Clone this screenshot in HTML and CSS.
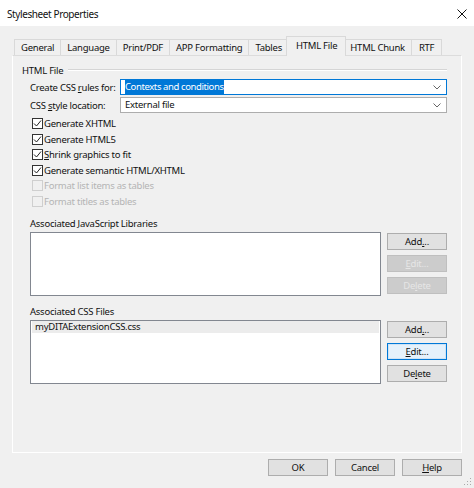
FILE: index.html
```html
<!DOCTYPE html>
<html>
<head>
<meta charset="utf-8">
<title>Stylesheet Properties</title>
<link rel="stylesheet" href="styles.css">
</head>
<body>
<div class="window">
  <div class="titlebar">
    <span class="title">Stylesheet Properties</span>
    <span class="close"><svg width="10" height="10" viewBox="0 0 10 10"><path d="M0.5 0.5 L9.5 9.5 M9.5 0.5 L0.5 9.5" stroke="#111" stroke-width="1" fill="none"/></svg></span>
  </div>

  <div class="tabs">
    <div class="tab">General</div>
    <div class="tab">Language</div>
    <div class="tab">Print/PDF</div>
    <div class="tab">APP Formatting</div>
    <div class="tab">Tables</div>
    <div class="tab active">HTML File</div>
    <div class="tab">HTML Chunk</div>
    <div class="tab">RTF</div>
  </div>

  <div class="panel">
    <div class="group-head"><span class="group-title">HTML File</span><span class="group-rule"></span></div>

    <div class="field-row">
      <span class="field-label">Create CSS <u>r</u>ules for:</span>
      <div class="combo focused">
        <span class="combo-value"><span class="selected-text">Contexts and conditions</span></span>
        <svg class="chev" width="8" height="5" viewBox="0 0 8 5"><path d="M0.5 0.5 L4 4 L7.5 0.5" stroke="#666" stroke-width="1" fill="none"/></svg>
      </div>
    </div>
    <div class="field-row">
      <span class="field-label">CSS <u>s</u>tyle location:</span>
      <div class="combo">
        <span class="combo-value">External file</span>
        <svg class="chev" width="8" height="5" viewBox="0 0 8 5"><path d="M0.5 0.5 L4 4 L7.5 0.5" stroke="#666" stroke-width="1" fill="none"/></svg>
      </div>
    </div>

    <div class="checks">
      <div class="check"><span class="box"><svg width="9" height="9" viewBox="0 0 9 9"><path d="M1 4.5 L3.5 7 L8 1.5" stroke="#222" stroke-width="1" fill="none"/></svg></span><span>Generate XHTML</span></div>
      <div class="check"><span class="box"><svg width="9" height="9" viewBox="0 0 9 9"><path d="M1 4.5 L3.5 7 L8 1.5" stroke="#222" stroke-width="1" fill="none"/></svg></span><span>Generate HTML5</span></div>
      <div class="check"><span class="box"><svg width="9" height="9" viewBox="0 0 9 9"><path d="M1 4.5 L3.5 7 L8 1.5" stroke="#222" stroke-width="1" fill="none"/></svg></span><span><u>S</u>hrink graphics to fit</span></div>
      <div class="check"><span class="box"><svg width="9" height="9" viewBox="0 0 9 9"><path d="M1 4.5 L3.5 7 L8 1.5" stroke="#222" stroke-width="1" fill="none"/></svg></span><span>Generate semantic HTML/XHTML</span></div>
      <div class="check disabled"><span class="box"></span><span>Format list items as tables</span></div>
      <div class="check disabled"><span class="box"></span><span>Format titles as tables</span></div>
    </div>

    <div class="section-label">Associated JavaScript Libraries</div>
    <div class="list-row">
      <div class="listbox"></div>
      <div class="btn-col">
        <button class="btn">Add<u>.</u>..</button>
        <button class="btn" disabled><u>E</u>dit...</button>
        <button class="btn" disabled>De<u>l</u>ete</button>
      </div>
    </div>

    <div class="section-label second">Associated CSS Files</div>
    <div class="list-row">
      <div class="listbox">
        <div class="list-item">myDITAExtensionCSS.css</div>
      </div>
      <div class="btn-col">
        <button class="btn">Add<u>.</u>..</button>
        <button class="btn focus"><u>E</u>dit...</button>
        <button class="btn">De<u>l</u>ete</button>
      </div>
    </div>
  </div>

  <div class="footer">
    <button class="btn wide">OK</button>
    <button class="btn wide">Cancel</button>
    <button class="btn wide"><u>H</u>elp</button>
  </div>

  <svg class="grip" width="8" height="8" viewBox="0 0 8 8">
    <rect x="6" y="0" width="1" height="1" fill="#aaa"/>
    <rect x="3" y="3" width="1" height="1" fill="#aaa"/>
    <rect x="6" y="3" width="1" height="1" fill="#aaa"/>
    <rect x="0" y="6" width="1" height="1" fill="#aaa"/>
    <rect x="3" y="6" width="1" height="1" fill="#aaa"/>
    <rect x="6" y="6" width="1" height="1" fill="#aaa"/>
  </svg>
</div>
</body>
</html>
```

FILE: styles.css
```css
* { box-sizing: border-box; }

html, body {
  margin: 0;
  padding: 0;
  background: #f0f0f0;
}

body {
  font-family: "Noto Sans", "Open Sans", sans-serif;
  font-size: 9.5px;
  letter-spacing: -0.25px;
  color: #111;
}

.window {
  position: relative;
  width: 474px;
  height: 488px;
  background: #f0f0f0;
  overflow: hidden;
}

/* title bar */
.titlebar {
  height: 26px;
  background: #fff;
  display: flex;
  align-items: center;
  padding-left: 7px;
}
.title {
  font-size: 10px;
  letter-spacing: -0.4px;
  margin-top: 2px;
}
.close {
  margin-left: auto;
  width: 24px;
  height: 26px;
  display: flex;
  align-items: center;
  justify-content: center;
  margin-top: 2px;
}

/* tabs */
.tabs {
  margin: 10px 12px 0 14px;
  height: 19px;
  display: flex;
  align-items: flex-end;
}
.tab {
  height: 16px;
  padding: 0 6px;
  line-height: 15px;
  border: 1px solid #d9d9d9;
  border-bottom: none;
  border-left: none;
  background: #f0f0f0;
  white-space: nowrap;
}
.tab:first-child { border-left: 1px solid #d9d9d9; }
.tab:last-child { padding: 0 7px; }
.tab.active {
  position: relative;
  z-index: 1;
  height: 20px;
  margin: 0 -2px -1px -3px;
  padding: 0 8px 0 9px;
  line-height: 17px;
  border-left: 1px solid #d9d9d9;
  background: #f0f0f0;
}
.tab.active + .tab { border-left: none; }

/* panel */
.panel {
  margin: 0 12px;
  height: 398px;
  border: 1px solid #fff;
  border-top-color: #dcdcdc;
  background: #f0f0f0;
  padding: 7px 14px 0 9px;
}

.group-head {
  height: 14px;
  display: flex;
  align-items: center;
}
.group-title { margin-right: 5px; }
.group-rule {
  flex: 1;
  height: 2px;
  border-top: 1px solid #d5d5d5;
  border-bottom: 1px solid #fff;
  margin-top: -1px;
}

.field-row {
  display: flex;
  align-items: center;
  height: 16px;
  margin: 2px 0 0 8px;
}
.field-label {
  width: 90px;
  flex: none;
}
u { text-decoration: underline; text-underline-offset: 1px; }

.combo {
  flex: 1;
  height: 16px;
  background: #fff;
  border: 1px solid #adadad;
  display: flex;
  align-items: center;
  padding: 0 5px 0 4px;
}
.combo.focused { border-color: #0078d7; }
.combo-value { flex: 1; line-height: 14px; }
.selected-text {
  background: #0078d7;
  color: #fff;
  padding: 1px 0;
  letter-spacing: -0.4px;
}
.chev { flex: none; }

/* checkboxes */
.checks {
  margin: 3px 0 0 10px;
}
.check {
  height: 15.5px;
  display: flex;
  align-items: center;
}
.box {
  width: 11px;
  height: 11px;
  border: 1px solid #333;
  background: #fff;
  margin-right: 1px;
  display: flex;
  align-items: center;
  justify-content: center;
  flex: none;
}
.check.disabled { color: #b4b4b4; }
.check.disabled .box {
  border-color: #cfcfcf;
  background: #f0f0f0;
}

/* lists */
.section-label {
  height: 14px;
  line-height: 14px;
  margin: 8px 0 0 8px;
}
.section-label.second { margin-top: 9px; }

.list-row {
  display: flex;
  gap: 6px;
  margin: 1px 0 0 8px;
}
.listbox {
  flex: 1;
  height: 64px;
  background: #fff;
  border: 1px solid #828790;
  padding: 0 1px;
}
.list-item {
  height: 12px;
  line-height: 12px;
  padding-left: 3px;
  background: #ececec;
}

.btn-col {
  width: 60px;
  display: flex;
  flex-direction: column;
  gap: 5px;
  padding-top: 1px;
}

.btn {
  font-family: inherit;
  font-size: inherit;
  letter-spacing: inherit;
  color: #111;
  height: 17px;
  width: 60px;
  padding: 0;
  margin: 0;
  background: #e1e1e1;
  border: 1px solid #adadad;
  border-radius: 0;
  line-height: 14px;
}
.btn:disabled {
  background: #cccccc;
  border-color: #bfbfbf;
  color: #e6e6e6;
}
.btn.focus {
  border-color: #0078d7;
  box-shadow: inset 0 0 0 1px #cfe3f5;
  background: #e5f1fb;
}

/* footer */
.footer {
  display: flex;
  justify-content: flex-end;
  gap: 7px;
  padding-right: 12px;
  margin-top: 6px;
}

.grip {
  position: absolute;
  right: 2px;
  bottom: 2px;
}
```
